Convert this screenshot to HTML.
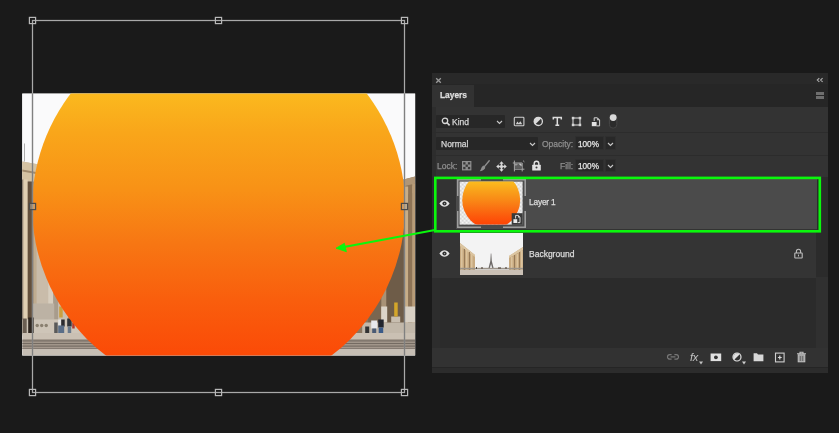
<!DOCTYPE html>
<html><head><meta charset="utf-8">
<style>
*{margin:0;padding:0;box-sizing:border-box}
html,body{width:839px;height:433px;overflow:hidden;background:#1a1a1a;font-family:"Liberation Sans",sans-serif}
.a{position:absolute}
#canvas{left:22px;top:93px;width:393px;height:262px;overflow:hidden;background:#f7f7f8;transform:translate(0.2px,0.5px)}
#circle{left:10px;top:-73px;width:373px;height:373px;border-radius:50%;
 background:linear-gradient(180deg,#fdd020 0%,#fbb91e 19.6%,#f9a61a 30%,#f89216 45%,#f77613 60%,#f95e0d 75%,#fb4a07 90%,#fd3c04 100%)}
.ln{background:#a8a8a8}
.hd{width:7px;height:7px;border:1px solid #b4b4b4}
#panel{left:432px;top:73px;width:397px;height:300px;background:#313131}
.txt{color:#d6d6d6;font-size:9px;white-space:nowrap;will-change:transform;-webkit-text-stroke:0.25px currentColor}
</style></head><body>

<div id="canvas" class="a">
  <svg class="a" style="left:0;top:0" width="393" height="262" viewBox="0 0 393 262">
 <rect width="393" height="262" fill="#fafafb"/>
 <!-- left building -->
 <polygon points="0,68 150,95 150,240 0,240" fill="#c2b4a0"/>
 <polygon points="0,68 150,95 150,116 0,86" fill="#d4c2a2"/>
 <polygon points="0,76 150,103 150,105 0,78" fill="#a08a6c"/>
 <rect x="0" y="86" width="1.2" height="154" fill="#6d5e4e"/>
 <rect x="1.2" y="86" width="4.3" height="140" fill="#e0cfb2"/><rect x="2" y="50" width="0.8" height="18" fill="#9a9a9a"/>
 <rect x="5.5" y="88" width="4.5" height="138" fill="#64503c"/>
 <rect x="10" y="88" width="1.5" height="138" fill="#9a8468"/>
 <rect x="11.5" y="90" width="3" height="136" fill="#bfac90"/>
 <rect x="14.5" y="92" width="11.5" height="134" fill="#c9bcaa"/>
 <rect x="26" y="94" width="5" height="132" fill="#d7cebf"/>
 <rect x="31" y="96" width="5" height="130" fill="#a89c8c"/>
 <rect x="36" y="98" width="10" height="128" fill="#c9bfb0"/>
 <rect x="46" y="100" width="6" height="126" fill="#9d907f"/>
 <rect x="52" y="102" width="14" height="124" fill="#d0c6b8"/>
 <rect x="10" y="210" width="22" height="17" fill="#bcb2a4"/>
 <rect x="37" y="213" width="3.5" height="11" fill="#c9a040"/>
 <rect x="0" y="226" width="80" height="14" fill="#cec5b8"/>
 <circle cx="15" cy="232" r="1.7" fill="#8a8070"/><circle cx="19.5" cy="232" r="1.7" fill="#8a8070"/><circle cx="24" cy="232" r="1.7" fill="#8a8070"/>
 <!-- left people -->
 <rect x="0.5" y="225" width="4" height="17" fill="#6a5e52"/>
 <rect x="6" y="224" width="5.5" height="18" fill="#2e2620"/>
 <rect x="32" y="229" width="3.5" height="12" fill="#5a5a5a"/>
 <rect x="36" y="226" width="3" height="6" fill="#e4e4e4"/>
 <rect x="39" y="226" width="3.5" height="7" fill="#2a2a2e"/>
 <rect x="36" y="232" width="6" height="9" fill="#5a6e88"/>
 <rect x="45" y="225" width="4.5" height="8" fill="#30343a"/>
 <rect x="45.5" y="233" width="3.5" height="8" fill="#6a7a8c"/>
 <rect x="50" y="229" width="2.5" height="6" fill="#b03a30"/>
 <!-- right building -->
 <polygon points="393,83 250,120 250,240 393,240" fill="#8a7660"/>
 <polygon points="393,83 250,120 250,135 393,99" fill="#b09676"/>
 <polygon points="393,90 250,125 250,127 393,92" fill="#8a7458"/>
 <rect x="382" y="93" width="4" height="147" fill="#c8ae88"/>
 <rect x="386" y="92" width="4" height="148" fill="#8e7456"/>
 <rect x="390" y="90" width="3" height="150" fill="#b89c78"/>
 <rect x="364" y="97" width="18" height="143" fill="#6e5c48"/>
 <rect x="359" y="99" width="5" height="141" fill="#a89276"/>
 <rect x="346" y="102" width="13" height="138" fill="#7a6650"/>
 <rect x="359" y="213" width="6" height="16" fill="#dcd4c8"/>
 <rect x="382" y="213" width="11" height="16" fill="#d8d0c4"/>
 <rect x="369" y="223" width="9" height="6" fill="#c8beb0"/>
 <rect x="372" y="209" width="3.5" height="14" fill="#d4a62a"/>
 <rect x="340" y="229" width="53" height="11" fill="#c2b8aa"/>
 <!-- right people -->
 <rect x="343" y="233" width="4" height="8" fill="#333"/>
 <rect x="349" y="227" width="6" height="8" fill="#e8e8ec"/>
 <rect x="350" y="235" width="4" height="6" fill="#4a5a74"/>
 <rect x="356" y="226" width="5.5" height="8" fill="#22252e"/>
 <rect x="356.5" y="234" width="4.5" height="8" fill="#3a5a88"/>
 <!-- ground -->
 <rect x="0" y="239.5" width="393" height="6" fill="#cac0b3"/>
 <rect x="0" y="245.5" width="393" height="10" fill="#a69b8f"/>
 <rect x="0" y="246.8" width="393" height="1.2" fill="#746b62"/>
 <rect x="0" y="249.4" width="393" height="1.2" fill="#746b62"/>
 <rect x="0" y="252" width="393" height="1.2" fill="#746b62"/>
 <rect x="0" y="254.4" width="393" height="1.1" fill="#857b72"/>
 <rect x="0" y="255.5" width="393" height="6.5" fill="#c6beb4"/>
</svg>
<div id="circle" class="a"></div>
</div>

<!-- transform box -->
<svg class="a" style="left:0;top:0" width="420" height="433" viewBox="0 0 420 433">
<rect x="32.5" y="20.5" width="372" height="372" fill="none" stroke="#a9a9a9" stroke-width="1.25"/>
<path d="M32.5 93.5V355.5M404.5 93.5V355.5" stroke="#808080" stroke-width="1.25"/>
<g fill="none" stroke="#4a4a4a" stroke-width="1.2"><rect x="29.4" y="203.4" width="6.2" height="6.2" fill="#b0a898" fill-opacity="0.5"/><rect x="401.4" y="203.4" width="6.2" height="6.2" fill="#b0a898" fill-opacity="0.5"/></g>
<g fill="none" stroke="#b8b8b8" stroke-width="1.2"><rect x="29.4" y="17.4" width="6.2" height="6.2"/><rect x="29.4" y="389.4" width="6.2" height="6.2"/><rect x="215.4" y="17.4" width="6.2" height="6.2"/><rect x="215.4" y="389.4" width="6.2" height="6.2"/><rect x="401.4" y="17.4" width="6.2" height="6.2"/><rect x="401.4" y="389.4" width="6.2" height="6.2"/></g>
</svg>

<!-- PANEL -->
<div class="a" style="left:432px;top:73px;width:396.4px;height:300px;background:#2b2b2b"></div>
<div class="a" style="left:432px;top:277px;width:8px;height:71px;background:#2d2d2d"></div>
<div class="a" style="left:432px;top:73px;width:396.4px;height:11px;background:#292929"></div>
<div class="a" style="left:432px;top:84px;width:396.4px;height:23px;background:#262626"></div>
<div class="a" style="left:432px;top:85px;width:42px;height:22px;background:#323232"></div>
<div class="a txt" style="left:439.5px;top:90.3px;font-size:8.4px;font-weight:bold;color:#dedede">Layers</div>
<svg class="a" style="left:435px;top:77px" width="7" height="7" viewBox="0 0 7 7"><path d="M1.2 1.2L5.8 5.8M5.8 1.2L1.2 5.8" stroke="#9a9a9a" stroke-width="1.3"/></svg>
<svg class="a" style="left:816px;top:77px" width="8" height="6" viewBox="0 0 8 6"><path d="M3.3 1.2L1.3 3L3.3 4.8M6.6 1.2L4.6 3L6.6 4.8" stroke="#b0b0b0" stroke-width="1.1" fill="none"/></svg>
<div class="a" style="left:816px;top:92px;width:8px;height:3px;background:#6e6e6e"></div>
<div class="a" style="left:816px;top:96px;width:8px;height:3px;background:#6e6e6e"></div>
<!-- toolbar rows -->
<div class="a" style="left:432px;top:107px;width:396.4px;height:70px;background:#333333"></div>
<div class="a" style="left:432px;top:107px;width:3.5px;height:70px;background:#2d2d2d"></div>
<div class="a" style="left:432px;top:132px;width:396.4px;height:1px;background:#2c2c2c"></div>
<div class="a" style="left:432px;top:155px;width:396.4px;height:1px;background:#2c2c2c"></div>
<!-- list rows -->
<div class="a" style="left:432px;top:177px;width:385px;height:54px;background:#333333"></div>
<div class="a" style="left:432px;top:177px;width:2px;height:100px;background:#2c2c2c"></div>
<div class="a" style="left:456px;top:177px;width:361px;height:52px;background:#4b4b4b"></div>
<div class="a" style="left:432px;top:231px;width:384px;height:47px;background:#343434"></div>
<!-- bottom toolbar -->
<div class="a" style="left:816px;top:277px;width:12.4px;height:71px;background:#303030"></div>
<div class="a" style="left:432px;top:348px;width:396.4px;height:19px;background:#323232"></div>
<div class="a" style="left:432px;top:367px;width:396.4px;height:1px;background:#252525"></div>
<div class="a" style="left:432px;top:368px;width:396.4px;height:5px;background:#2c2c2c"></div>
<!-- CONTROLS -->
<div class="a" style="left:436px;top:115px;width:69px;height:13px;background:#272727;border-radius:1px"></div>
<svg class="a" style="left:441px;top:117px" width="10" height="9" viewBox="0 0 10 9"><circle cx="4" cy="3.8" r="2.7" stroke="#d8d8d8" stroke-width="1.3" fill="none"/><path d="M6 5.8L8.6 8.4" stroke="#d8d8d8" stroke-width="1.6"/></svg>
<div class="a txt" style="left:452px;top:117px;font-size:8.5px">Kind</div>
<svg class="a" style="left:496px;top:120px" width="7" height="5" viewBox="0 0 7 5"><path d="M1 1L3.5 3.5L6 1" stroke="#c8c8c8" stroke-width="1.1" fill="none"/></svg>

<div class="a" style="left:436px;top:137px;width:102px;height:13px;background:#272727;border-radius:1px"></div>
<div class="a txt" style="left:441px;top:139px;font-size:8.5px">Normal</div>
<svg class="a" style="left:529px;top:142px" width="7" height="5" viewBox="0 0 7 5"><path d="M1 1L3.5 3.5L6 1" stroke="#c8c8c8" stroke-width="1.1" fill="none"/></svg>
<div class="a txt" style="left:542px;top:139px;font-size:8.5px;color:#8e8e8e">Opacity:</div>
<div class="a" style="left:575px;top:136px;width:29px;height:13.5px;background:#282828;border:1px solid #2f2f2f"></div>
<div class="a txt" style="left:578px;top:139.6px;font-size:8.2px;color:#e4e4e4">100%</div>
<div class="a" style="left:605px;top:136px;width:10.5px;height:13.5px;background:#282828;border:1px solid #2f2f2f"></div>
<svg class="a" style="left:607px;top:142px" width="7" height="5" viewBox="0 0 7 5"><path d="M1 1L3.5 3.5L6 1" stroke="#c8c8c8" stroke-width="1.1" fill="none"/></svg>

<div class="a txt" style="left:437px;top:161px;font-size:8.5px;color:#8e8e8e">Lock:</div>
<div class="a txt" style="left:560px;top:161px;font-size:8.5px;color:#8e8e8e">Fill:</div>
<div class="a" style="left:575px;top:158.5px;width:29px;height:13.5px;background:#282828;border:1px solid #2f2f2f"></div>
<div class="a txt" style="left:578px;top:161.6px;font-size:8.2px;color:#e4e4e4">100%</div>
<div class="a" style="left:605px;top:158.5px;width:10.5px;height:13.5px;background:#282828;border:1px solid #2f2f2f"></div>
<svg class="a" style="left:607px;top:164px" width="7" height="5" viewBox="0 0 7 5"><path d="M1 1L3.5 3.5L6 1" stroke="#c8c8c8" stroke-width="1.1" fill="none"/></svg>

<div class="a txt" style="left:529.3px;top:197.1px;font-size:8.4px;letter-spacing:-0.2px;color:#dcdcdc">Layer 1</div>
<div class="a txt" style="left:529px;top:249px;font-size:8.5px;color:#dcdcdc">Background</div>

<!-- THUMB layer1 -->
<svg class="a" style="left:457px;top:179px" width="69" height="49" viewBox="0 0 69 49">
 <defs>
  <pattern id="chk" width="4" height="4" patternUnits="userSpaceOnUse" x="2.6" y="2.6"><rect width="4" height="4" fill="#f4f4f4"/><rect width="2" height="2" fill="#d6d6d6"/><rect x="2" y="2" width="2" height="2" fill="#d6d6d6"/></pattern>
  <linearGradient id="tg" x1="0" y1="0" x2="0" y2="1"><stop offset="0" stop-color="#fdd020"/><stop offset="0.2" stop-color="#fbb91e"/><stop offset="0.35" stop-color="#f9a01a"/><stop offset="0.5" stop-color="#f98916"/><stop offset="0.64" stop-color="#fa7112"/><stop offset="0.78" stop-color="#fc5a0c"/><stop offset="0.9" stop-color="#fe4807"/><stop offset="1" stop-color="#ff3c04"/></linearGradient>
  <clipPath id="tc"><rect x="2.6" y="2.6" width="63" height="43"/></clipPath>
 </defs>
 <rect x="2.6" y="2.6" width="63" height="43" fill="url(#chk)"/>
 <circle cx="34.2" cy="21" r="29" fill="url(#tg)" clip-path="url(#tc)"/>
 <path d="M0.7 17V0.7H24M46 0.7H68.2V17M68.2 32V48.2H46M24 48.2H0.7V32" stroke="#9e9e9e" stroke-width="1.6" fill="none"/>
 <rect x="54.7" y="34.2" width="11" height="11.6" fill="#3a3a3a"/>
 <path d="M58.6 39.5V36.4H61.2L63 38.2V43.6H60.6" stroke="#e8e8e8" stroke-width="0.9" fill="none"/><path d="M61 36.4V38.4H63Z" fill="#e8e8e8"/><rect x="56.4" y="40.2" width="3.8" height="3.8" fill="#ececec"/>
</svg>
<!-- THUMB background -->
<svg class="a" style="left:460px;top:233px" width="63" height="42" viewBox="0 0 63 42">
 <rect width="63" height="42" fill="#f3f3f3"/>
 <polygon points="0,10 15,22 15,37 0,37" fill="#c8aa80"/>
 <polygon points="0,10 15,22 15,24 0,13" fill="#dcc6a2"/>
 <rect x="1" y="14" width="1.5" height="23" fill="#dcc49e"/><rect x="4" y="16" width="1" height="21" fill="#967a58"/><rect x="6" y="17" width="1.5" height="20" fill="#dcc49e"/><rect x="9" y="19" width="1" height="18" fill="#967a58"/><rect x="11" y="21" width="1.5" height="16" fill="#dcc49e"/>
 <polygon points="63,14 49,23 49,37 63,37" fill="#c8aa80"/>
 <polygon points="63,14 49,23 49,25 63,17" fill="#dcc6a2"/>
 <rect x="51" y="24" width="1.5" height="13" fill="#dcc49e"/><rect x="54" y="22" width="1" height="15" fill="#967a58"/><rect x="56.5" y="21" width="1.5" height="16" fill="#dcc49e"/><rect x="59" y="19" width="1" height="18" fill="#967a58"/><rect x="61" y="18" width="1.5" height="19" fill="#dcc49e"/>
 <path d="M30.8 20.5L31.3 20.5L31.8 28L33.6 35H32.2L31.05 31L29.9 35H28.5L30.3 28Z" fill="#6e6a68"/>
 <rect x="0" y="34.8" width="63" height="1.6" fill="#9c948a"/><rect x="16" y="34" width="1" height="2" fill="#4a4038"/><rect x="21" y="34.3" width="2" height="1.5" fill="#6a6058"/><rect x="38" y="34.3" width="3" height="1.5" fill="#6a6058"/><rect x="45" y="34.3" width="2" height="1.5" fill="#6a6058"/>
 <rect x="0" y="37" width="63" height="5" fill="#cbc1b6"/>
</svg>
<!-- ICONS row1 -->
<svg class="a" style="left:513px;top:116px" width="12" height="11" viewBox="0 0 12 11"><rect x="1.3" y="1.3" width="9.6" height="8.4" rx="0.8" stroke="#cfcfcf" stroke-width="1.1" fill="none"/><path d="M2.8 8.2L4.4 5.4L5.8 7.2L7.4 5.2L9.2 8.2Z" fill="#cfcfcf"/></svg>
<svg class="a" style="left:533px;top:116px" width="11" height="11" viewBox="0 0 11 11"><circle cx="5.3" cy="5.4" r="4.1" stroke="#dadada" stroke-width="1.3" fill="none"/><path d="M8.2 2.5A4.1 4.1 0 0 0 2.4 8.3Z" fill="#dadada"/></svg>
<svg class="a" style="left:552px;top:116px" width="11" height="11" viewBox="0 0 11 11"><path d="M1.3 3.6V1.4H9.3V3.6M5.3 1.4V9.3M3.4 9.3H7.2" stroke="#dcdcdc" stroke-width="1.5" fill="none"/></svg>
<svg class="a" style="left:571px;top:116px" width="11" height="11" viewBox="0 0 11 11"><rect x="2" y="2" width="7" height="7" stroke="#d4d4d4" stroke-width="1.1" fill="none"/><rect x="0.8" y="0.8" width="2.5" height="2.5" fill="#d4d4d4"/><rect x="7.7" y="0.8" width="2.5" height="2.5" fill="#d4d4d4"/><rect x="0.8" y="7.7" width="2.5" height="2.5" fill="#d4d4d4"/><rect x="7.7" y="7.7" width="2.5" height="2.5" fill="#d4d4d4"/></svg>
<svg class="a" style="left:591px;top:117px" width="10" height="10" viewBox="0 0 10 10"><path d="M3.2 4V0.8H6.4L8.6 3V8.9H5.6" stroke="#d6d6d6" stroke-width="1" fill="none"/><path d="M6.2 0.8V3.2H8.6Z" fill="#d6d6d6"/><rect x="0.8" y="5" width="4.8" height="4.2" fill="#e2e2e2"/></svg>
<svg class="a" style="left:608px;top:113px" width="10" height="16" viewBox="0 0 10 16"><rect x="1.4" y="1.2" width="7.4" height="14" rx="3.7" fill="#2b2b2b" stroke="#484848" stroke-width="0.9"/><circle cx="5.2" cy="4.6" r="3.4" fill="#dadada"/></svg>
<!-- ICONS lock row -->
<svg class="a" style="left:462px;top:161px" width="10" height="10" viewBox="0 0 10 10"><rect x="0" y="0" width="9.4" height="9.4" fill="#8e8e8e"/><rect x="1.2" y="1.2" width="2.3" height="2.3" fill="#3a3a3a"/><rect x="5.9" y="1.2" width="2.3" height="2.3" fill="#3a3a3a"/><rect x="3.55" y="3.55" width="2.3" height="2.3" fill="#3a3a3a"/><rect x="1.2" y="5.9" width="2.3" height="2.3" fill="#3a3a3a"/><rect x="5.9" y="5.9" width="2.3" height="2.3" fill="#3a3a3a"/></svg>
<svg class="a" style="left:479px;top:160px" width="12" height="12" viewBox="0 0 12 12"><path d="M10.2 0.8L5.6 6.4" stroke="#8e8e8e" stroke-width="1.4" stroke-linecap="round"/><path d="M4.9 5.6C3.3 6 2.5 7.4 2.1 8.8C1.8 9.8 1.3 10.6 0.8 11.3C2.6 11.2 4.6 10.4 5.8 8.8C6.5 7.8 6.4 6.8 4.9 5.6Z" fill="#8e8e8e"/></svg>
<svg class="a" style="left:495.5px;top:160.5px" width="11" height="11" viewBox="0 0 11 11"><path d="M5.5 2V9M2 5.5H9" stroke="#d8d8d8" stroke-width="1.6"/><path d="M5.5 0.2L7.7 2.8H3.3ZM5.5 10.8L7.7 8.2H3.3ZM0.2 5.5L2.8 3.3V7.7ZM10.8 5.5L8.2 3.3V7.7Z" fill="#d8d8d8"/><circle cx="5.5" cy="5.5" r="1.5" fill="#d8d8d8"/></svg>
<svg class="a" style="left:512px;top:160px" width="13" height="12" viewBox="0 0 13 12"><path d="M2.4 0.6V11.4M0.8 3H10.2M2.4 9.2H12.4M10.2 3V11.4" stroke="#a8a8a8" stroke-width="1" fill="none"/><path d="M3 3.5H7L9.6 6V8.7H3Z" fill="#5e5e5e"/><path d="M6.2 3.5L9.6 6.6V4.4L8.6 3.5Z" fill="#c8c8c8"/><path d="M3 3.5H6.5L4.5 5.5H3Z" fill="#9a9a9a"/><path d="M11 0.6L12.4 1.9" stroke="#a8a8a8" stroke-width="0.9"/></svg>
<svg class="a" style="left:531px;top:160px" width="11" height="11" viewBox="0 0 11 11"><path d="M3.2 5V3.6A2.3 2.3 0 0 1 7.8 3.6V5" stroke="#e2e2e2" stroke-width="1.4" fill="none"/><rect x="1.2" y="4.8" width="8.6" height="5.6" rx="0.5" fill="#e2e2e2"/><circle cx="5.5" cy="7.5" r="1" fill="#3a3a3a"/></svg>
<!-- eyes -->
<svg class="a" style="left:439px;top:200px" width="11" height="7" viewBox="0 0 11 7"><path d="M0.4 3.5C2 1.1 3.7 0.2 5.5 0.2S9 1.1 10.6 3.5C9 5.9 7.3 6.8 5.5 6.8S2 5.9 0.4 3.5Z" fill="#e4e4e4"/><circle cx="5.5" cy="3.5" r="2.1" fill="#303030"/><circle cx="5.6" cy="3.6" r="0.6" fill="#bbbbbb"/></svg>
<svg class="a" style="left:439px;top:250px" width="11" height="7" viewBox="0 0 11 7"><path d="M0.4 3.5C2 1.1 3.7 0.2 5.5 0.2S9 1.1 10.6 3.5C9 5.9 7.3 6.8 5.5 6.8S2 5.9 0.4 3.5Z" fill="#e4e4e4"/><circle cx="5.5" cy="3.5" r="2.1" fill="#303030"/><circle cx="5.6" cy="3.6" r="0.6" fill="#bbbbbb"/></svg>
<!-- bg lock -->
<svg class="a" style="left:793px;top:248px" width="11" height="11" viewBox="0 0 11 11"><path d="M3.4 5V3.4A2.1 2.1 0 0 1 7.6 3.4V5" stroke="#bdbdbd" stroke-width="1.1" fill="none"/><rect x="1.8" y="5" width="7.4" height="5" rx="0.5" stroke="#bdbdbd" stroke-width="1.1" fill="none"/><rect x="5" y="6.6" width="1" height="1.8" fill="#bdbdbd"/></svg>
<!-- bottom icons -->
<svg class="a" style="left:666px;top:353px" width="14" height="8" viewBox="0 0 14 8"><path d="M5.6 1.6H3.8A2.3 2.3 0 0 0 3.8 6.2H5.6M8.4 1.6H10.2A2.3 2.3 0 0 1 10.2 6.2H8.4M4.6 3.9H9.4" stroke="#787878" stroke-width="1.2" fill="none"/></svg>
<div class="a" style="left:689.5px;top:350.5px;font-style:italic;font-size:11px;color:#c4c4c4;letter-spacing:-0.3px;will-change:transform">fx</div>
<svg class="a" style="left:699px;top:361px" width="4" height="4" viewBox="0 0 4 4"><path d="M0 0.6H4L2 3.4Z" fill="#c2c2c2"/></svg>
<svg class="a" style="left:710px;top:353px" width="12" height="9" viewBox="0 0 12 9"><rect x="0.6" y="0.5" width="10.6" height="7.6" fill="#e0e0e0"/><circle cx="5.9" cy="4.3" r="1.9" fill="#333"/></svg>
<svg class="a" style="left:732px;top:352px" width="10" height="10" viewBox="0 0 10 10"><circle cx="5" cy="5" r="4" stroke="#e0e0e0" stroke-width="1.2" fill="none"/><path d="M7.8 2.2A4 4 0 0 0 2.2 7.8Z" fill="#e0e0e0"/></svg>
<svg class="a" style="left:742px;top:361px" width="4" height="4" viewBox="0 0 4 4"><path d="M0 0.6H4L2 3.4Z" fill="#d0d0d0"/></svg>
<svg class="a" style="left:753px;top:352px" width="11" height="10" viewBox="0 0 11 10"><path d="M0.6 1.2H4L5 2.4H10.4V9.2H0.6Z" fill="#d8d8d8"/></svg>
<svg class="a" style="left:774px;top:352px" width="11" height="11" viewBox="0 0 11 11"><rect x="1.5" y="1.1" width="8.6" height="8.8" stroke="#cfcfcf" stroke-width="1.1" fill="none"/><path d="M5.8 3.6V7.4M3.9 5.5H7.7" stroke="#d8d8d8" stroke-width="1.2"/></svg>
<svg class="a" style="left:796px;top:351px" width="11" height="12" viewBox="0 0 11 12"><path d="M1 2.8H10M4 2.6V1.2H7V2.6" stroke="#c4c4c4" stroke-width="1.1" fill="none"/><rect x="2.2" y="3.8" width="6.6" height="7" fill="#9a9a9a" stroke="#c4c4c4" stroke-width="1"/><path d="M4.4 5V10M6.6 5V10" stroke="#5a5a5a" stroke-width="0.7"/></svg>
<!-- green annotation -->
<svg class="a" style="left:0;top:0" width="839" height="433" viewBox="0 0 839 433"><rect x="435.3" y="177.9" width="384.5" height="53.4" fill="none" stroke="#0af70c" stroke-width="2.6"/></svg>
<svg class="a" style="left:0;top:0" width="839" height="433" viewBox="0 0 839 433"><path d="M435 230L344 247" stroke="#0af70c" stroke-width="2.2"/><path d="M336 248.2L344.4 243.3L346.4 251.7Z" fill="#0af70c" stroke="#0af70c" stroke-width="0.8" stroke-linejoin="round"/></svg>
</body></html>
